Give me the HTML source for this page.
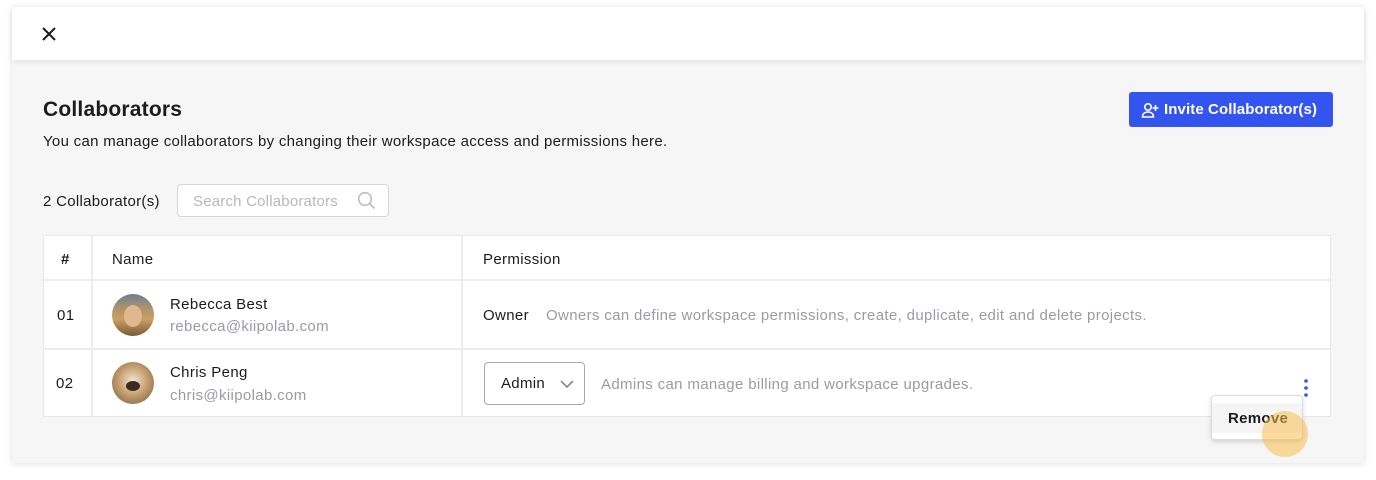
<!DOCTYPE html>
<html><head><meta charset="utf-8"><style>
*{box-sizing:border-box;margin:0;padding:0}
body{width:1376px;height:480px;background:#fff;font-family:"Liberation Sans",sans-serif;color:#1c1c1c;position:relative;overflow:hidden}
.panel{position:absolute;left:12px;top:7px;width:1352px;height:456px;background:#f6f6f6;box-shadow:0 1px 6px rgba(0,0,0,.12)}
.hdr{position:absolute;left:0;top:0;width:100%;height:53px;background:#fff;box-shadow:0 2px 5px rgba(0,0,0,.08)}
.abs{position:absolute}
h1{position:absolute;left:31px;top:91px;font-size:21px;font-weight:bold;letter-spacing:.2px}
.sub{left:31px;top:126px;font-size:15px;letter-spacing:.3px}
.btn{left:1117px;top:85px;width:204px;height:35px;background:#3454f0;border-radius:3px;color:#fff;font-size:15px;font-weight:bold;display:flex;align-items:center;padding-left:12px;gap:5px;letter-spacing:.1px}
.cnt{left:31px;top:186px;font-size:15px;letter-spacing:.3px}
.search{left:165px;top:177px;width:212px;height:33px;border:1px solid #d6d6d6;border-radius:4px;background:#fff;font-size:15px;color:#b8b8b8;padding:8px 0 0 15px;letter-spacing:.2px}
.tbl{left:31px;top:228px;width:1288px;height:182px;background:#fff;border:1px solid #e8e8e8}
.vl{position:absolute;top:0;bottom:0;width:2px;background:#ececec}
.hl{position:absolute;left:0;right:0;height:2px;background:#ececec}
.t{position:absolute;font-size:15px;letter-spacing:.35px}
.g{color:#9a9aa8}
.av{position:absolute;width:42px;height:42px;border-radius:50%;overflow:hidden}
.sel{position:absolute;left:440px;top:126px;width:101px;height:43px;border:1px solid #a9a9b3;border-radius:4px;font-size:15px;padding:12px 0 0 16px;letter-spacing:.3px}
</style></head><body>
<div class="panel">
 <div class="hdr"><svg class="abs" style="left:30px;top:20px" width="14" height="14" viewBox="0 0 14 14"><path d="M1 1L13 13M13 1L1 13" stroke="#1c1c1c" stroke-width="2"/></svg></div>
 <h1>Collaborators</h1>
 <div class="abs sub">You can manage collaborators by changing their workspace access and permissions here.</div>
 <div class="abs btn"><svg width="18" height="16" viewBox="0 0 18 16" fill="none" stroke="#fff" stroke-width="1.6"><circle cx="7" cy="5" r="3.2"/><path d="M1.5 15c0-3.5 2.5-5 5.5-5s5.5 1.5 5.5 5z"/><path d="M14.5 3v6M11.5 6h6"/></svg>Invite Collaborator(s)</div>
 <div class="abs cnt">2 Collaborator(s)</div>
 <div class="abs search">Search Collaborators<svg class="abs" style="left:179px;top:6px" width="19" height="19" viewBox="0 0 19 19" fill="none" stroke="#bdbdbd" stroke-width="1.6"><circle cx="8" cy="8" r="6.3"/><path d="M12.6 12.6L17.5 17.5"/></svg></div>
 <div class="abs tbl">
  <div class="vl" style="left:47px"></div><div class="vl" style="left:417px"></div>
  <div class="hl" style="top:43px"></div><div class="hl" style="top:112px"></div>
  <div class="t" style="left:17px;top:15px;font-weight:bold">#</div>
  <div class="t" style="left:68px;top:15px">Name</div>
  <div class="t" style="left:439px;top:15px">Permission</div>
  <div class="t" style="left:13px;top:71px">01</div>
  <div class="av" style="left:68px;top:58px;background:linear-gradient(#6b8096 0,#a89070 30%,#c9a060 60%,#7a5a3a 100%)"><svg width="42" height="42"><ellipse cx="21" cy="22" rx="9" ry="11" fill="#e0b890"/></svg></div>
  <div class="t" style="left:126px;top:60px">Rebecca Best</div>
  <div class="t g" style="left:126px;top:82px">rebecca@kiipolab.com</div>
  <div class="t" style="left:439px;top:71px">Owner</div>
  <div class="t g" style="left:502px;top:71px">Owners can define workspace permissions, create, duplicate, edit and delete projects.</div>
  <div class="t" style="left:12px;top:139px">02</div>
  <div class="av" style="left:68px;top:126px;background:radial-gradient(circle at 50% 45%,#f0e6d8 0,#c8a070 45%,#6a5a40 100%)"><svg width="42" height="42"><ellipse cx="21" cy="24" rx="7" ry="5" fill="#3a2a20"/></svg></div>
  <div class="t" style="left:126px;top:128px">Chris Peng</div>
  <div class="t g" style="left:126px;top:151px">chris@kiipolab.com</div>
  <div class="sel">Admin<svg class="abs" style="left:75px;top:17px" width="14" height="9" viewBox="0 0 14 9" fill="none" stroke="#888" stroke-width="1.6"><path d="M1 1l6 6 6-6"/></svg></div>
  <div class="t g" style="left:557px;top:140px">Admins can manage billing and workspace upgrades.</div>
  <svg class="abs" style="left:1259px;top:142px" width="6" height="20"><circle cx="3" cy="3" r="1.8" fill="#3454f0"/><circle cx="3" cy="10" r="1.8" fill="#3454f0"/><circle cx="3" cy="17" r="1.8" fill="#3454f0"/></svg>
 </div>
 <div class="abs" style="left:1199px;top:388px;width:92px;height:45px;background:#fff;border:1px solid #ddd;border-radius:4px;box-shadow:0 2px 5px rgba(0,0,0,.15)"><div class="abs" style="left:0;top:7px;width:100%;height:30px;background:#f5f5f5"></div><div class="abs" style="left:16px;top:14px;font-size:15px;font-weight:bold;letter-spacing:.3px">Remove</div></div>
 <div class="abs" style="left:1250px;top:404px;width:46px;height:46px;border-radius:50%;background:rgba(250,190,80,.55)"></div>
</div>
</body></html>
